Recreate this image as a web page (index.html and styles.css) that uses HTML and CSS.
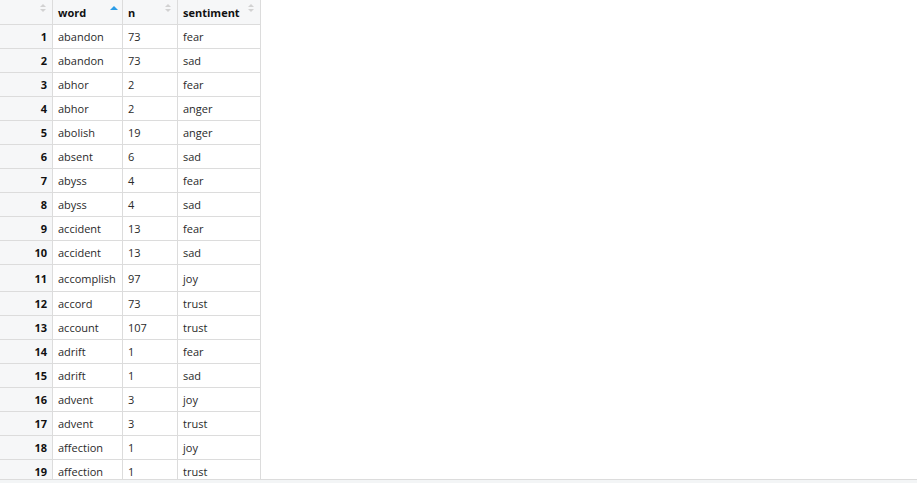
FILE: index.html
```html
<!DOCTYPE html>
<html lang="en">
<head>
    <meta charset="UTF-8">
    <title>Data Viewer</title>
    <link rel="stylesheet" href="styles.css">
</head>
<body>
    <div class="viewer">
        <div class="grid-wrap">
            <table class="grid">
                <thead>
                    <tr>
                        <th class="rownum"><span class="sort"></span></th>
                        <th class="col-word">word<span class="sort asc"></span></th>
                        <th class="col-n">n<span class="sort"></span></th>
                        <th class="col-sent">sentiment<span class="sort"></span></th>
                    </tr>
                </thead>
                <tbody id="rows"></tbody>
            </table>
        </div>
        <div class="statusbar"></div>
    </div>

    <script>
        let data = [
            ["abandon", 73, "fear"],
            ["abandon", 73, "sad"],
            ["abhor", 2, "fear"],
            ["abhor", 2, "anger"],
            ["abolish", 19, "anger"],
            ["absent", 6, "sad"],
            ["abyss", 4, "fear"],
            ["abyss", 4, "sad"],
            ["accident", 13, "fear"],
            ["accident", 13, "sad"],
            ["accomplish", 97, "joy"],
            ["accord", 73, "trust"],
            ["account", 107, "trust"],
            ["adrift", 1, "fear"],
            ["adrift", 1, "sad"],
            ["advent", 3, "joy"],
            ["advent", 3, "trust"],
            ["affection", 1, "joy"],
            ["affection", 1, "trust"]
        ];

        let tbody = document.getElementById("rows");
        data.forEach(function (row, i) {
            let tr = document.createElement("tr");
            // long words make the grid row a bit taller
            if (row[0].length > 9) tr.className = "tall";
            tr.innerHTML = '<td class="rownum">' + (i + 1) + '</td>' +
                '<td>' + row[0] + '</td>' +
                '<td>' + row[1] + '</td>' +
                '<td>' + row[2] + '</td>';
            tbody.appendChild(tr);
        });
    </script>
</body>
</html>
```

FILE: styles.css
```css
html, body {
    margin: 0;
    padding: 0;
    height: 100%;
    background: #fff;
}
body {
    font-family: "Open Sans", "Segoe UI", sans-serif;
    font-size: 11px;
    color: #2a2a2a;
}
.viewer {
    height: 483px;
    display: flex;
    flex-direction: column;
    overflow: hidden;
}
.grid-wrap {
    flex: 1;
    overflow: hidden;
}
.grid {
    border-collapse: collapse;
    table-layout: fixed;
    width: 261px;
}
.grid th, .grid td {
    border: 1px solid #dcdcdc;
    height: 23px;
    padding: 0 5px;
    text-align: left;
    white-space: nowrap;
    overflow: hidden;
}
.grid tr.tall td {
    height: 26px;
}
.grid tr > :first-child {
    border-left: none;
}
.grid thead tr > * {
    border-top: none;
}
.grid th {
    position: relative;
    height: 24px;
    background: #f6f7f8;
    font-weight: bold;
    color: #111;
}
.grid th.rownum { width: 42px; }
.grid th.col-word { width: 59px; }
.grid th.col-n { width: 44px; }
.grid th.col-sent { width: 72px; }
.grid td.rownum {
    background: #f6f7f8;
    text-align: right;
    font-weight: bold;
    color: #111;
}
.sort {
    position: absolute;
    right: 5px;
    top: 4px;
    width: 7px;
    height: 9px;
}
.sort::before, .sort::after {
    content: "";
    position: absolute;
    left: 0;
    border-left: 3.5px solid transparent;
    border-right: 3.5px solid transparent;
}
.sort::before {
    top: 0;
    border-bottom: 3.5px solid #d2d2d2;
}
.sort::after {
    top: 5px;
    border-top: 3.5px solid #d2d2d2;
}
.sort.asc::before {
    top: 2px;
    border-left-width: 4px;
    border-right-width: 4px;
    border-bottom: 4px solid #2b9de8;
}
.sort.asc::after {
    display: none;
}
.statusbar {
    height: 3px;
    border-top: 1px solid #dcdcdc;
    background: #f3f5f6;
}
```
